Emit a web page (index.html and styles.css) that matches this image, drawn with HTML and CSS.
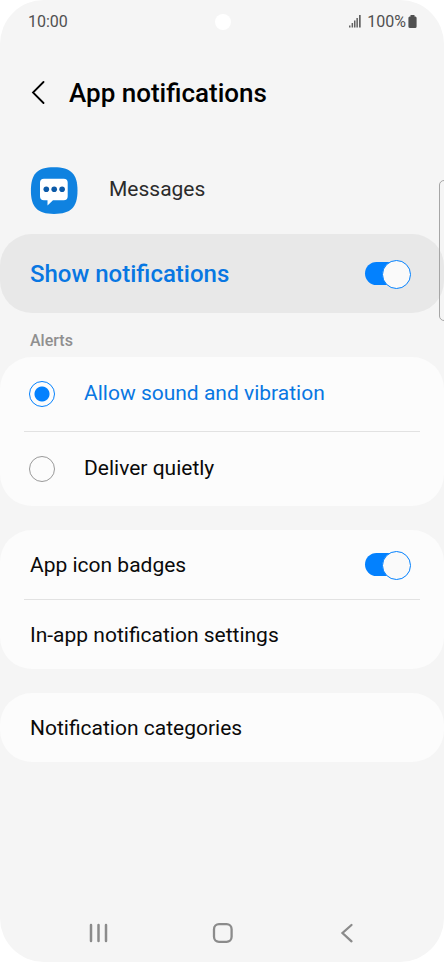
FILE: index.html
```html
<!DOCTYPE html>
<html lang="en">
<head>
<meta charset="utf-8">
<meta name="viewport" content="width=device-width, initial-scale=1">
<title>App notifications</title>
<link rel="stylesheet" href="styles.css">
</head>
<body>
<div class="phone">
  <div class="status">
    <span>10:00</span>
    <span class="camera"></span>
    <span class="status-right">
      <svg width="12" height="13" viewBox="0 0 12 13" fill="#606060" aria-hidden="true"><path d="M0 10.500h1.500v2H0zM2.600 8h1.500v4.500H2.600zM5 5.500h1.500v7H5zM7.400 3h1.500v9.500H7.400zM10 0h1.700v12.500H10z"/></svg>
      <span class="percent">100%</span>
      <svg width="9" height="13" viewBox="0 0 9 13" fill="#505050" aria-hidden="true"><path d="M2.500 0h4v1.500h.8Q8.600 1.500 8.600 3v8.500q0 1.500-1.500 1.500h-5Q.4 13 .4 11.500V3Q.4 1.500 1.700 1.500h.8z"/></svg>
    </span>
  </div>
  <header class="header">
    <button class="back" type="button" aria-label="Back">
      <svg width="14" height="24" viewBox="0 0 14 24" fill="none" stroke="#000" stroke-width="1.800" stroke-linecap="round"><path d="M12.500 1L2 11.500 12.500 22"/></svg>
    </button>
    <h1>App notifications</h1>
  </header>
  <main>
    <div class="app">
      <svg width="48" height="48" viewBox="0 0 48 48" aria-hidden="true">
        <path d="M24 1.200C41 1.200 47.500 8 47.500 24.600S41 48 24 48 .9 41 .9 24.600 7 1.200 24 1.200z" fill="#0f82e0"/>
        <path d="M14 12.700h19.700q4 0 4 4v13.500q0 4-4 4H23L17.500 39.500v-5.300H14q-4 0-4-4V16.700q0-4 4-4z" fill="#fff"/>
        <g fill="#0c5aa8"><circle cx="16.300" cy="23.200" r="2.800"/><circle cx="24.200" cy="23.200" r="2.800"/><circle cx="32.100" cy="23.200" r="2.800"/></g>
      </svg>
      <span>Messages</span>
    </div>
    <label class="master">
      <span>Show notifications</span>
      <input class="switch" type="checkbox" role="switch" checked>
    </label>
    <h2 id="alerts">Alerts</h2>
    <div class="card" role="radiogroup" aria-labelledby="alerts">
      <label class="row option"><input class="radio" type="radio" name="alert" checked><span>Allow sound and vibration</span></label>
      <hr>
      <label class="row option"><input class="radio" type="radio" name="alert"><span>Deliver quietly</span></label>
    </div>
    <div class="card">
      <label class="row"><span>App icon badges</span><input class="switch" type="checkbox" role="switch" checked></label>
      <hr>
      <a class="row" href="#">In-app notification settings</a>
    </div>
    <div class="card">
      <a class="row" href="#">Notification categories</a>
    </div>
  </main>
  <nav class="nav" aria-label="System">
    <button type="button" aria-label="Recent apps"><svg width="24" height="24" viewBox="0 0 24 24" fill="none" stroke="#8b8b8b" stroke-width="2.500" stroke-linecap="round"><path d="M5 4v16M12.500 4v16M20 4v16"/></svg></button>
    <button type="button" aria-label="Home"><svg width="24" height="24" viewBox="0 0 24 24" fill="none" stroke="#8b8b8b" stroke-width="2.300"><rect x="3" y="3.200" width="17.600" height="17.600" rx="5"/></svg></button>
    <button type="button" aria-label="Back"><svg width="24" height="24" viewBox="0 0 24 24" fill="none" stroke="#8b8b8b" stroke-width="2.300" stroke-linecap="round"><path d="M16.500 4L7.500 12l9 8.300"/></svg></button>
  </nav>
  <div class="edge-handle"></div>
</div>
</body>
</html>
```
FILE: styles.css
```css
* { box-sizing: border-box; }
body {
  margin: 0;
  background: #fff;
  color: #0a0a0a;
  font: 21px/28px Roboto, sans-serif;
}
button { border: 0; padding: 0; background: none; display: flex; }
svg { display: block; }
.phone {
  position: relative;
  display: flex;
  flex-direction: column;
  min-height: 100vh;
  overflow: hidden;
  border-radius: 44px;
  background: #f5f5f5;
}
.status {
  display: grid;
  grid-template-columns: 1fr auto 1fr;
  align-items: center;
  height: 42px;
  padding: 1px 27px 0 28px;
  font-size: 16px;
  line-height: 20px;
  color: #505050;
}
.camera { width: 16px; height: 16px; border-radius: 50%; background: #fff; }
.status-right { display: flex; align-items: center; justify-content: flex-end; gap: 2px; }
.percent { margin-left: 4px; }
.header { display: flex; align-items: center; gap: 24px; height: 102px; padding: 0 31px; }
h1 { margin: 0; font-size: 26px; line-height: 32px; font-weight: 500; color: #000; }
.app {
  display: flex;
  align-items: center;
  gap: 31px;
  padding: 22px 30px 20px;
  color: #2b2b2b;
}
.app span { padding-bottom: 2px; }
.master {
  display: flex;
  align-items: center;
  justify-content: space-between;
  height: 79px;
  padding: 0 33px 0 30px;
  border-radius: 32px;
  background: #e8e8e8;
  color: #0877e2;
  font-size: 24px;
  font-weight: 500;
}
h2 {
  margin: 18px 30px 6px;
  font-size: 16px;
  line-height: 20px;
  font-weight: 500;
  color: #8f8f8f;
}
.card { margin-bottom: 24px; border-radius: 32px; background: #fcfcfc; }
.row {
  display: flex;
  align-items: center;
  justify-content: space-between;
  height: 69px;
  padding: 0 33px 0 30px;
  color: inherit;
  text-decoration: none;
}
.option { justify-content: flex-start; gap: 29px; height: 74px; padding: 0 29px; }
.option span { padding-bottom: 2px; }
.option:has(:checked) { color: #0877e2; }
hr { height: 1px; margin: 0 24px; border: 0; background: #e2e2e2; }
.radio {
  appearance: none;
  width: 26px;
  height: 26px;
  margin: 0;
  border: 1px solid #999;
  border-radius: 50%;
}
.radio:checked {
  border-color: #0381fe;
  background: radial-gradient(circle, #0381fe 7px, transparent 8px);
}
.switch {
  appearance: none;
  position: relative;
  width: 46px;
  height: 27px;
  margin: 0;
}
.switch::before {
  content: "";
  position: absolute;
  inset: 2px 4px 2px 0;
  border-radius: 12px;
  background: #0381fe;
}
.switch::after {
  content: "";
  position: absolute;
  top: 0;
  right: 0;
  width: 27px;
  height: 27px;
  border: 1px solid #0381fe;
  border-radius: 50%;
  background: #fafafa;
}
.nav {
  display: flex;
  justify-content: space-between;
  margin-top: auto;
  padding: 0 85px 17px 86px;
}
.edge-handle {
  position: absolute;
  top: 180px;
  right: -6px;
  width: 11px;
  height: 141px;
  border: 1px solid #a6a6a6;
  border-radius: 5px;
}
```
